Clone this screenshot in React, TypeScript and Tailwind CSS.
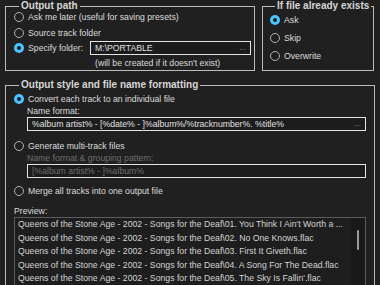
import React from "react";

const FONT = { fontFamily: '"Liberation Sans", Arial, sans-serif' };

function Radio({ checked, disabled }: { checked?: boolean; disabled?: boolean }) {
  if (checked) {
    return (
      <span className="w-[10px] h-[10px] shrink-0 rounded-full bg-[#4cc2ff] flex items-center justify-center">
        <span className="w-[4px] h-[4px] rounded-full bg-[#16202a]" />
      </span>
    );
  }
  return (
    <span
      className={
        "w-[10px] h-[10px] shrink-0 rounded-full border " +
        (disabled ? "border-[#666]" : "border-[#b0b0b0]")
      }
    />
  );
}

function RadioRow({ label, checked, className = "" }: { label: string; checked?: boolean; className?: string }) {
  return (
    <div className={"flex items-center h-[12px] gap-[4px] " + className}>
      <Radio checked={checked} />
      <span className="text-[8.7px] leading-[12px] text-[#dcdcdc] whitespace-nowrap">{label}</span>
    </div>
  );
}

function Group({ title, className = "", children }: { title: string; className?: string; children: React.ReactNode }) {
  return (
    <fieldset className={"border border-[#bdbdbd] min-w-0 " + className}>
      <legend className="ml-[5px] px-[2px] text-[10px] leading-[12px] font-bold text-[#d6d6d6] whitespace-nowrap">
        {title}
      </legend>
      {children}
    </fieldset>
  );
}

function TextBox({ value, disabled, dots, className = "" }: { value: string; disabled?: boolean; dots?: boolean; className?: string }) {
  return (
    <div className={"h-[14px] border border-[#e4e4e4] bg-[#1c1c1c] flex items-center pl-[4px] pr-[4px] " + className}>
      <span
        className={
          "flex-1 text-[8.7px] leading-[12px] whitespace-nowrap overflow-hidden " +
          (disabled ? "text-[#6e6e6e]" : "text-[#e0e0e0]")
        }
      >
        {value}
      </span>
      {dots && <span className="text-[8px] leading-[12px] text-[#9a9a9a]">...</span>}
    </div>
  );
}

const tracks = [
  "01. You Think I Ain't Worth a ...",
  "02. No One Knows.flac",
  "03. First It Giveth.flac",
  "04. A Song For The Dead.flac",
  "05. The Sky Is Fallin'.flac",
];

export default function App() {
  return (
    <div className="w-[380px] h-[285px] overflow-hidden bg-[#202020] px-[5px]" style={FONT}>
      <div className="flex gap-[7px]">
        <Group title="Output path" className="w-[250px] pl-[8px] pr-[3px] pb-[1px]">
          <RadioRow label="Ask me later (useful for saving presets)" className="-mt-[1px]" />
          <RadioRow label="Source track folder" className="mt-[4px]" />
          <div className="flex items-center h-[14px] mt-[2px]">
            <div className="flex items-center gap-[4px] w-[76px]">
              <Radio checked />
              <span className="text-[8.7px] leading-[12px] text-[#dcdcdc]">Specify folder:</span>
            </div>
            <TextBox value="M:\PORTABLE" dots className="flex-1" />
          </div>
          <div className="h-[12px] mt-[2px] pl-[81px] text-[8.7px] leading-[12px] text-[#dcdcdc] whitespace-nowrap">
            (will be created if it doesn't exist)
          </div>
        </Group>
        <Group title="If file already exists" className="w-[112px] pl-[7px] pb-[8px]">
          <RadioRow label="Ask" checked className="mt-[2px]" />
          <RadioRow label="Skip" className="mt-[6px]" />
          <RadioRow label="Overwrite" className="mt-[6px]" />
        </Group>
      </div>

      <Group title="Output style and file name formatting" className="mt-[8px] pl-[8px] pr-[8px] pb-[20px]">
        <RadioRow label="Convert each track to an individual file" checked className="mt-[2px]" />
        <div className="pl-[13px]">
          <div className="h-[12px] text-[8.7px] leading-[12px] text-[#dcdcdc]">Name format:</div>
          <TextBox value="%album artist% - [%date% - ]%album%/%tracknumber%. %title%" dots />
        </div>
        <RadioRow label="Generate multi-track files" className="mt-[9px]" />
        <div className="pl-[13px]">
          <div className="h-[12px] text-[8.7px] leading-[12px] text-[#6e6e6e]">Name format &amp; grouping pattern:</div>
          <TextBox value="[%album artist% - ]%album%" disabled />
        </div>
        <RadioRow label="Merge all tracks into one output file" className="mt-[7px]" />
        <div className="h-[12px] mt-[8px] text-[8.7px] leading-[12px] text-[#dcdcdc]">Preview:</div>
        <div className="flex border border-[#5c5c5c] bg-[#1e1e1e] h-[80px]">
          <div className="flex-1 pl-[3px]">
            {tracks.map((t) => (
              <div key={t} className="h-[13.6px] text-[8.7px] leading-[13.6px] text-[#d4d4d4] whitespace-nowrap">
                Queens of the Stone Age - 2002 - Songs for the Deaf\{t}
              </div>
            ))}
          </div>
          <div className="w-[14px] bg-[#191919] flex justify-center pt-[12px]">
            <div className="w-[2px] h-[20px] bg-[#9a9a9a] rounded-full" />
          </div>
        </div>
      </Group>
    </div>
  );
}
